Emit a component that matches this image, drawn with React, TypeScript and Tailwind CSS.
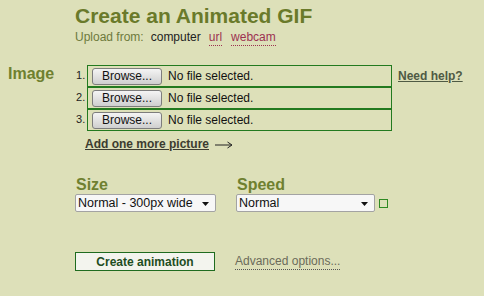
import type { ReactNode } from "react";

const rows = [1, 2, 3];

function FileRow({ n }: { n: number }) {
    return (
        <div className="flex">
            <span className="w-[12px] pl-[1px] pt-[4px] text-[11px] leading-[12px] text-[#222]">{n}.</span>
            <div className="flex h-[22px] w-[305px] items-center border border-[#237a1f] pl-[4px]">
                <button className="h-[17px] w-[70px] rounded-[3px] border border-[#7d7d7d] bg-gradient-to-b from-[#f4f4f4] to-[#cfcfcf] text-[12px] leading-[15px] text-[#111]">
                    Browse...
                </button>
                <span className="ml-[6px] text-[12px] leading-[16px] text-[#111]">No file selected.</span>
            </div>
        </div>
    );
}

function FakeSelect({ width, children }: { width: string; children: ReactNode }) {
    return (
        <div className={`relative flex h-[18px] items-center rounded-[2px] border border-[#a3a3a3] bg-[#f7f7f7] pl-[2px] text-[12.5px] leading-[16px] text-[#111] ${width}`}>
            <span>{children}</span>
            <svg className="absolute right-[6px] top-[7px]" width="7" height="4" viewBox="0 0 7 4">
                <path d="M0 0 H7 L3.5 4 Z" fill="#111" />
            </svg>
        </div>
    );
}

export default function App() {
    return (
        <div className="h-[296px] w-[484px] overflow-hidden bg-[#dde0b9] font-['Liberation_Sans',Arial,sans-serif]">
            <div className="pl-[75px] pt-[4px]">
                <h1 className="text-[21px] font-bold leading-[24px] text-[#6a7a2a]">Create an Animated GIF</h1>
                <div className="mt-[1px] flex text-[12px] leading-[16px]">
                    <span className="text-[#6d7a3c]">Upload from:</span>
                    <span className="ml-[7px] text-[#222]">computer</span>
                    <span className="ml-[8px] border-b border-dotted border-[#9c3251] text-[#9c3251]">url</span>
                    <span className="ml-[9px] border-b border-dotted border-[#9c3251] text-[#9c3251]">webcam</span>
                </div>
            </div>

            <div className="mt-[19px] flex">
                <div className="w-[75px] pl-[8px] text-[16px] font-bold leading-[18px] text-[#6f8030]">Image</div>
                <div className="flex flex-col">
                    {rows.map((n) => (
                        <FileRow key={n} n={n} />
                    ))}
                    <div className="mt-[5px] flex items-center pl-[10px] text-[12px] leading-[16px]">
                        <span className="font-bold text-[#3c3c30] underline">Add one more picture</span>
                        <svg className="ml-[6px] mt-[1px]" width="18" height="8" viewBox="0 0 18 8">
                            <path d="M0 4 H16.5 M12.5 1 L17 4 L12.5 7" fill="none" stroke="#222" strokeWidth="1" />
                        </svg>
                    </div>
                </div>
                <span className="ml-[6px] pt-[3px] text-[12px] font-bold leading-[16px] text-[#4f5a44] underline">Need help?</span>
            </div>

            <div className="mt-[24px] flex pl-[75px]">
                <div className="flex flex-col">
                    <span className="pl-[1px] text-[16px] font-bold leading-[18px] text-[#6f8030]">Size</span>
                    <FakeSelect width="w-[141px]">Normal - 300px wide</FakeSelect>
                </div>
                <div className="ml-[20px] flex flex-col">
                    <span className="pl-[1px] text-[16px] font-bold leading-[18px] text-[#6f8030]">Speed</span>
                    <div className="flex items-center">
                        <FakeSelect width="w-[139px]">Normal</FakeSelect>
                        <span className="ml-[4px] h-[9px] w-[9px] border border-[#2f8a22]" />
                    </div>
                </div>
            </div>

            <div className="mt-[40px] flex items-center pl-[75px]">
                <button className="h-[19px] w-[140px] border border-[#1f6b1f] bg-[#f3f4ee] text-[12px] font-bold leading-[16px] text-[#1f4d1f]">
                    Create animation
                </button>
                <span className="ml-[20px] border-b border-dotted border-[#555] text-[12px] leading-[15px] text-[#6b6b5a]">
                    Advanced options...
                </span>
            </div>
        </div>
    );
}
